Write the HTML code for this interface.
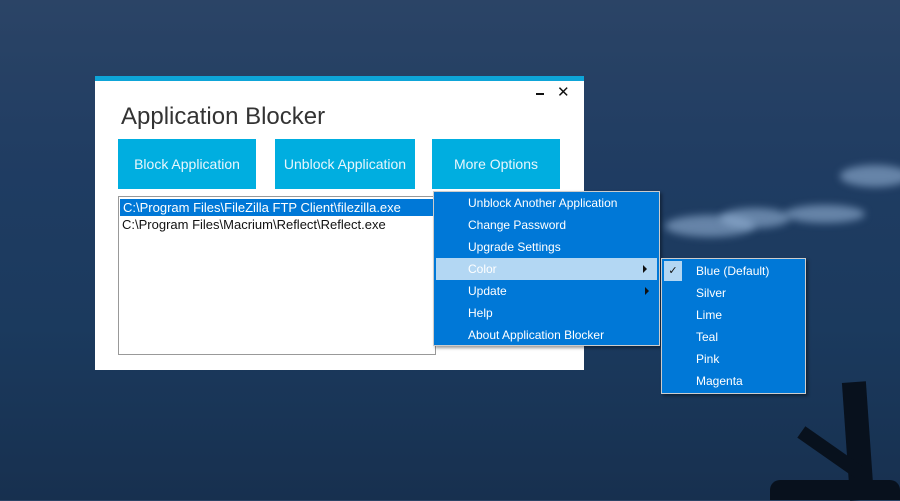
<!DOCTYPE html>
<html><head><style>
body{margin:0;width:900px;height:500px;overflow:hidden;position:relative;font-family:"Liberation Sans",sans-serif;
background:linear-gradient(180deg,#2b4466 0%,#1f3c62 35%,#1b3a5e 65%,#17304f 100%);}
.cloud{position:absolute;border-radius:50%;background:rgba(150,180,215,.6);filter:blur(4px)}
.win{position:absolute;left:95px;top:76px;width:489px;height:294px;background:#fff;border-top:5px solid #0ea5d8;box-sizing:border-box}
.title{position:absolute;left:26px;top:22px;font-size:24px;color:#333}
.btn{position:absolute;top:58px;height:50px;background:#00aee0;color:#e8f6fc;font-size:14px;display:flex;align-items:center;justify-content:center}
.list{position:absolute;left:23px;top:115px;width:316px;height:157px;border:1px solid #999;font-size:13px}
.list div{height:17px;line-height:17px;padding-left:3px;color:#111}
.menu{position:absolute;background:#0078d7;border:1px solid #ccc;box-shadow:2px 2px 3px rgba(0,0,0,.4);color:#fff;font-size:12px}
.menu div{height:22px;line-height:22px;padding-left:34px;position:relative}
.arr{position:absolute;right:10px;top:7px;width:0;height:0;border-left:4px solid #111;border-top:4px solid transparent;border-bottom:4px solid transparent}
.t{position:absolute;background:#08111d}
</style></head><body>
<div class="cloud" style="left:665px;top:215px;width:90px;height:22px"></div>
<div class="cloud" style="left:720px;top:208px;width:70px;height:20px"></div>
<div class="cloud" style="left:785px;top:205px;width:80px;height:18px"></div>
<div class="cloud" style="left:840px;top:165px;width:70px;height:22px"></div>
<div class="t" style="left:846px;top:382px;width:24px;height:118px;transform:rotate(-4deg)"></div>
<div class="t" style="left:795px;top:445px;width:70px;height:14px;transform:rotate(35deg)"></div>
<div class="t" style="left:770px;top:480px;width:130px;height:20px;border-radius:10px 10px 0 0"></div>
<div class="win">
<div style="position:absolute;left:441px;top:12px;width:8px;height:2px;background:#111"></div>
<div style="position:absolute;left:462px;top:2px;font-size:15px;color:#111">✕</div>
<div class="title">Application Blocker</div>
<div class="btn" style="left:23px;width:138px">Block Application</div>
<div class="btn" style="left:180px;width:140px">Unblock Application</div>
<div class="btn" style="left:337px;width:128px">More Options</div>
<div class="list"><div style="background:#0078d7;color:#fff;margin:2px 1px 0">C:\Program Files\FileZilla FTP Client\filezilla.exe</div><div>C:\Program Files\Macrium\Reflect\Reflect.exe</div></div>
</div>
<div class="menu" style="left:433px;top:191px;width:227px;height:155px;padding-top:0;box-sizing:border-box">
<div>Unblock Another Application</div><div>Change Password</div><div>Upgrade Settings</div>
<div style="background:#b3d7f3;margin:0 2px;padding-left:32px">Color<span class="arr"></span></div>
<div>Update<span class="arr"></span></div><div>Help</div><div>About Application Blocker</div>
</div>
<div class="menu" style="left:661px;top:258px;width:145px;height:136px;padding-top:1px;box-sizing:border-box">
<div><span style="position:absolute;left:2px;top:1px;width:18px;height:20px;background:#b3d7f3;color:#111;text-align:center;line-height:20px;font-size:11px">✓</span>Blue (Default)</div>
<div>Silver</div><div>Lime</div><div>Teal</div><div>Pink</div><div>Magenta</div>
</div>
</body></html>
